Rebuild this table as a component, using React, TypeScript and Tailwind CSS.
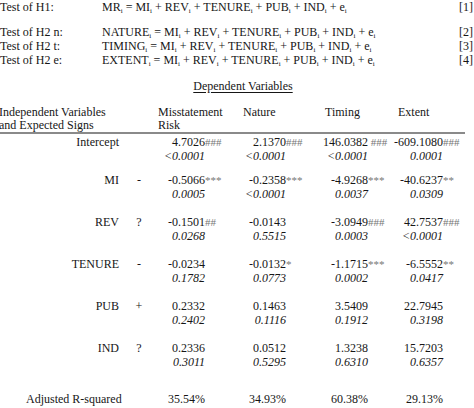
const equations = [
  { label: "Test of H1:", lhs: "MR", num: "[1]" },
  { label: "Test of H2 n:", lhs: "NATURE", num: "[2]" },
  { label: "Test of H2 t:", lhs: "TIMING", num: "[3]" },
  { label: "Test of H2 e:", lhs: "EXTENT", num: "[4]" },
];

type Cell = { v: string; m?: string; p?: string };

const rows: { name: string; sign: string; cells: Cell[] }[] = [
  {
    name: "Intercept",
    sign: "",
    cells: [
      { v: "4.7026", m: "###", p: "<0.0001" },
      { v: "2.1370", m: "###", p: "<0.0001" },
      { v: "146.0382", m: "\u00a0###", p: "<0.0001" },
      { v: "-609.1080", m: "###", p: "0.0001" },
    ],
  },
  {
    name: "MI",
    sign: "-",
    cells: [
      { v: "-0.5066", m: "***", p: "0.0005" },
      { v: "-0.2358", m: "***", p: "<0.0001" },
      { v: "-4.9268", m: "***", p: "0.0037" },
      { v: "-40.6237", m: "**", p: "0.0309" },
    ],
  },
  {
    name: "REV",
    sign: "?",
    cells: [
      { v: "-0.1501", m: "##", p: "0.0268" },
      { v: "-0.0143", p: "0.5515" },
      { v: "-3.0949", m: "###", p: "0.0003" },
      { v: "42.7537", m: "###", p: "<0.0001" },
    ],
  },
  {
    name: "TENURE",
    sign: "-",
    cells: [
      { v: "-0.0234", p: "0.1782" },
      { v: "-0.0132", m: "*", p: "0.0773" },
      { v: "-1.1715", m: "***", p: "0.0002" },
      { v: "-6.5552", m: "**", p: "0.0417" },
    ],
  },
  {
    name: "PUB",
    sign: "+",
    cells: [
      { v: "0.2332", p: "0.2402" },
      { v: "0.1463", p: "0.1116" },
      { v: "3.5409", p: "0.1912" },
      { v: "22.7945", p: "0.3198" },
    ],
  },
  {
    name: "IND",
    sign: "?",
    cells: [
      { v: "0.2336", p: "0.3011" },
      { v: "0.0512", p: "0.5295" },
      { v: "1.3238", p: "0.6310" },
      { v: "15.7203", p: "0.6357" },
    ],
  },
];

const grid = "grid grid-cols-[120px_38px_47px_81px_82px_75px]";

function Sub() {
  return <sub className="text-[7px]">i</sub>;
}

function Rhs() {
  return (
    <span>
      {" "}= MI<Sub /> + REV<Sub /> + TENURE<Sub /> + PUB<Sub /> + IND<Sub /> + e<Sub />
    </span>
  );
}

function ValueCell({ cell }: { cell: Cell }) {
  return (
    <div className="flex flex-col items-end">
      <div className="flex">
        <span>{cell.v}</span>
        {cell.m && (
          <span className="w-0 whitespace-nowrap text-[11px] text-[#757575]">{cell.m}</span>
        )}
      </div>
      <div className="italic">{cell.p}</div>
    </div>
  );
}

export default function App() {
  return (
    <div className="h-[408px] w-[474px] overflow-hidden bg-white font-['Liberation_Serif',serif] text-[12px] leading-[14px] text-[#161616]">
      {/* model equations */}
      <div className="flex flex-col">
        {equations.map((eq, i) => (
          <div key={eq.num} className={i === 1 ? "mt-[11px] flex" : "flex"}>
            <div className="w-[102px] shrink-0">{eq.label}</div>
            <div className="flex-1 whitespace-nowrap">
              {eq.lhs}
              <Sub />
              <Rhs />
            </div>
            <div className="pr-px">{eq.num}</div>
          </div>
        ))}
      </div>

      <div className="mt-[12px] flex justify-center pl-[12px]">
        <span className="underline underline-offset-2">Dependent Variables</span>
      </div>

      {/* column headings */}
      <div className={`${grid} mt-[13px] leading-[13px]`}>
        <div className="col-span-2 -ml-px whitespace-nowrap">
          Independent Variables
          <br />
          and Expected Signs
        </div>
        <div className="whitespace-nowrap">
          Misstatement
          <br />
          Risk
        </div>
        <div className="pl-[38px]">Nature</div>
        <div className="pl-[39px]">Timing</div>
        <div className="pl-[30px]">Extent</div>
      </div>
      <div className="h-[2px] w-[465px] bg-[#8a8a8a]" />

      {/* coefficients and p-values */}
      <div className="mt-px flex flex-col gap-[14px]">
        {rows.map((r, i) => (
          <div key={r.name} className={`${grid} ${i === 1 ? "mt-[-4px]" : ""}`}>
            <div className="pr-px text-right">{r.name}</div>
            <div className="text-center">{r.sign}</div>
            {r.cells.map((c, j) => (
              <ValueCell key={j} cell={c} />
            ))}
          </div>
        ))}
      </div>

      <div className={`${grid} mt-[23px]`}>
        <div className="col-span-2 whitespace-nowrap pl-[26px]">Adjusted R-squared</div>
        <div className="text-right">35.54%</div>
        <div className="text-right">34.93%</div>
        <div className="text-right">60.38%</div>
        <div className="text-right">29.13%</div>
      </div>
    </div>
  );
}
